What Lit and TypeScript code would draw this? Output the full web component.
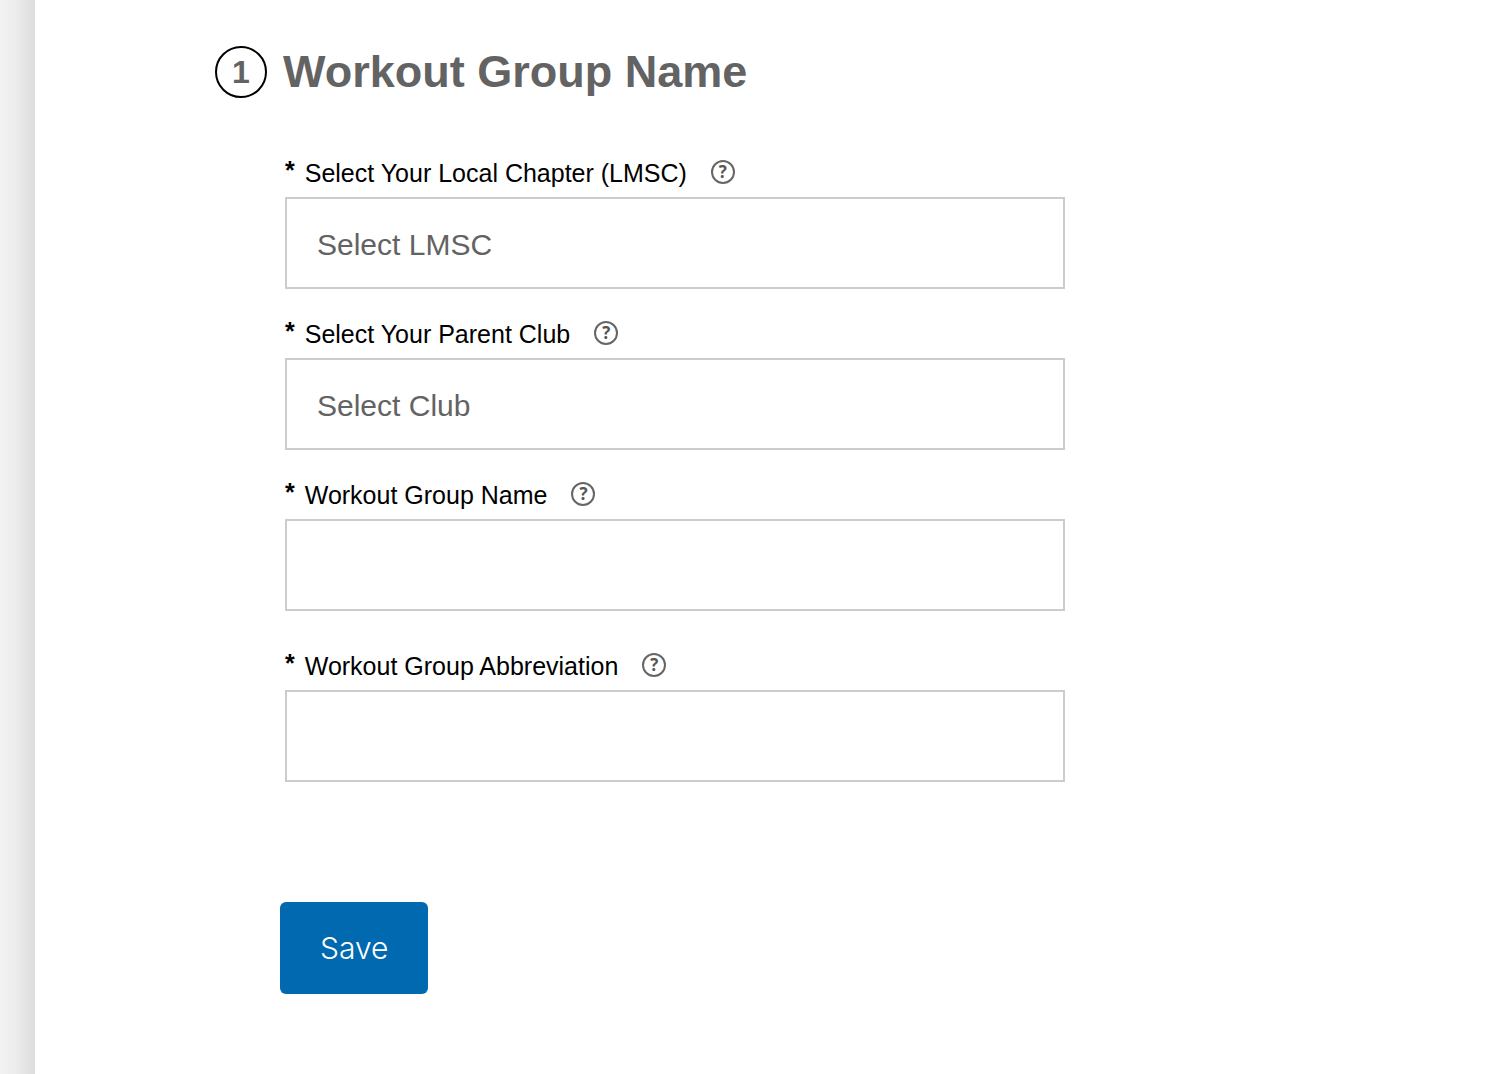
import { LitElement, html, css } from "lit";
import { customElement, property } from "lit/decorators.js";

type Field = { id: string; label: string; choice?: string; spaced?: boolean };

const FIELDS: Field[] = [
  { id: "lmsc", label: "Select Your Local Chapter (LMSC)", choice: "Select LMSC" },
  { id: "club", label: "Select Your Parent Club", choice: "Select Club" },
  { id: "group-name", label: "Workout Group Name" },
  { id: "group-abbr", label: "Workout Group Abbreviation", spaced: true },
];

@customElement("form-field")
class FormField extends LitElement {
  @property({ attribute: false }) field!: Field;

  static styles = css`
    :host {
      display: block;
      font-family: "Liberation Sans", Arial, sans-serif;
    }
    .caption {
      display: flex;
      align-items: center;
      height: 48px;
      font-size: 25px;
      line-height: 32px;
      color: #000;
    }
    .label {
      display: flex;
      gap: 10px;
    }
    .star {
      font-weight: 700;
      line-height: 26px;
    }
    .help {
      box-sizing: border-box;
      width: 24px;
      height: 24px;
      margin: 0 0 2px 24px;
      padding: 0;
      border: 2px solid #666;
      border-radius: 50%;
      background: none;
      color: #555;
      font: 700 17px/20px "Open Sans", sans-serif;
      text-align: center;
    }
    .control {
      appearance: none;
      box-sizing: border-box;
      display: block;
      width: 100%;
      height: 92px;
      margin: 0;
      padding: 4px 30px 0;
      border: 2px solid #ccc;
      border-radius: 0;
      background: #fff;
      color: #636363;
      font: 400 30px/40px "Liberation Sans", Arial, sans-serif;
    }
  `;

  render() {
    const { id, label, choice } = this.field;
    return html`
      <div class="caption">
        <label class="label" for=${id}><span class="star">*</span><span>${label}</span></label>
        <button class="help" type="button">?</button>
      </div>
      ${choice
        ? html`<select class="control" id=${id} required><option value="">${choice}</option></select>`
        : html`<input class="control" id=${id} type="text" required />`}
    `;
  }
}

@customElement("app-root")
class AppRoot extends LitElement {
  static styles = css`
    :host {
      display: flex;
      min-height: 100vh;
      background: #fff;
      font-family: "Liberation Sans", Arial, sans-serif;
    }
    .edge {
      flex: none;
      width: 35px;
      background: linear-gradient(to right, #f2f2f2, #ececec 45%, #dcdcdc);
    }
    .page {
      flex: 1;
      min-width: 0;
      padding: 44px 40px 80px 180px;
    }
    .title {
      display: flex;
      align-items: center;
      gap: 16px;
    }
    .step {
      box-sizing: border-box;
      flex: none;
      width: 52px;
      height: 52px;
      border: 2px solid #000;
      border-radius: 50%;
      color: #636363;
      font-size: 32px;
      font-weight: 700;
      line-height: 48px;
      text-align: center;
    }
    .heading {
      margin: 0;
      color: #636363;
      font-size: 45px;
      font-weight: 700;
      line-height: 56px;
    }
    .form {
      max-width: 780px;
      margin: 49px 0 0 70px;
    }
    .fields {
      display: flex;
      flex-direction: column;
      gap: 21px;
    }
    .spaced {
      margin-top: 10px;
    }
    .save {
      display: block;
      margin: 120px 0 0 -5px;
      padding: 24px 40px;
      border: 0;
      border-radius: 6px;
      background: #0069af;
      color: #fff;
      font: 300 30px/44px Inter, "Liberation Sans", sans-serif;
    }
  `;

  render() {
    return html`
      <div class="edge"></div>
      <main class="page">
        <div class="title">
          <span class="step">1</span>
          <h1 class="heading">Workout Group Name</h1>
        </div>
        <form class="form">
          <div class="fields">
            ${FIELDS.map(
              (f) => html`<form-field class=${f.spaced ? "spaced" : ""} .field=${f}></form-field>`
            )}
          </div>
          <button class="save" type="button">Save</button>
        </form>
      </main>
    `;
  }
}
